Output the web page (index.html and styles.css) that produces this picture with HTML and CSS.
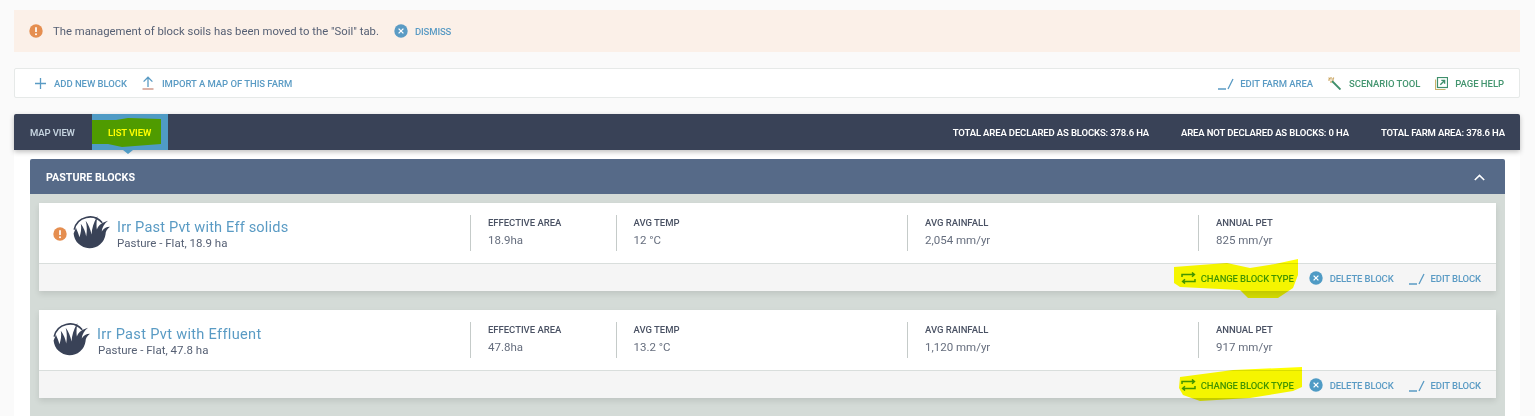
FILE: index.html
```html
<!DOCTYPE html>
<html lang="en">
<head>
<meta charset="utf-8">
<title>Blocks</title>
<link rel="stylesheet" href="styles.css">
</head>
<body>
<svg class="defs" width="0" height="0" aria-hidden="true">
  <defs>
    <symbol id="grass" viewBox="0 0 38 36">
      <path d="M1.2 15A16.5 16.5 0 0 1 30 8" fill="none" stroke="#394257" stroke-width="1.7"/>
      <path d="M.6 19L3 13C4 16 6 19 6.5 23C8 19 9 14 8 9C11 13 13 18 13.5 22C14.5 17 14.5 11 13 6C16 10 18 15 19 20C19.5 14 21 8 25 1C24 7 24 11 24.5 15C26.5 10 30 8 36 6C32 9 30 13 29.5 17C31.5 14 34 12 38 12C35 14 33.5 17 33.4 20A16.5 16.5 0 0 1 .6 19Z" fill="#394257"/>
    </symbol>
    <symbol id="edit" viewBox="0 0 16 13">
      <path d="M0 12H8M10 12L15 2" fill="none" stroke="currentColor" stroke-width="1.3"/>
    </symbol>
    <symbol id="close" viewBox="0 0 14 14">
      <circle cx="7" cy="7" r="6.7" fill="currentColor"/>
      <path d="M4.6 4.6L9.4 9.4M9.4 4.6L4.6 9.4" stroke="#fff" stroke-width="1.3"/>
    </symbol>
    <symbol id="warn" viewBox="0 0 14 14">
      <circle cx="7" cy="7" r="6.7" fill="#e58e50"/>
      <path d="M7 3.2V8" stroke="#fff" stroke-width="1.7"/>
      <circle cx="7" cy="10.2" r="1" fill="#fff"/>
    </symbol>
    <symbol id="swap" viewBox="0 0 15 12">
      <path d="M1 5V2.6H13M11 .5L13.4 2.6L11 4.7M14 7V9.4H2M4 7.3L1.6 9.4L4 11.5" fill="none" stroke="currentColor" stroke-width="1.5"/>
    </symbol>
  </defs>
</svg>

<div class="alert">
  <svg class="ic14"><use href="#warn"/></svg>
  <span class="alert-text">The management of block soils has been moved to the "Soil" tab.</span>
  <span class="link alert-link"><svg class="ic14"><use href="#close"/></svg>DISMISS</span>
</div>

<nav class="toolbar">
  <div class="tools">
    <span class="link"><svg class="ic-add" viewBox="0 0 11 11"><path d="M5.5 0V11M0 5.5H11" stroke="currentColor" stroke-width="1.3"/></svg>ADD NEW BLOCK</span>
    <span class="link"><svg class="ic-up" viewBox="0 0 12 14"><path d="M6 11V1.5M1.6 5.6L6 1.2L10.4 5.6" fill="none" stroke="currentColor" stroke-width="1.3"/><path d="M.5 13H11.5" stroke="#c98a7a" stroke-width="1.3"/></svg>IMPORT A MAP OF THIS FARM</span>
  </div>
  <div class="tools">
    <span class="link"><svg class="ic-edit"><use href="#edit"/></svg>EDIT FARM AREA</span>
    <span class="link green"><svg class="ic-wand" viewBox="0 0 13 13"><path d="M4 4L12.5 12.5" stroke="#3f8f6c" stroke-width="1.9"/><path d="M3 0V2.5M0 3H2.2M3.8 3H6M3 3.8V6M6 .6L4.6 2M.6 .6L2 2" stroke="#c9a25b" stroke-width="1.1"/></svg>SCENARIO TOOL</span>
    <span class="link green"><svg class="ic-help" viewBox="0 0 13 13"><path d="M.5 2.5V12.5H10.5" fill="none" stroke="#c9b26b" stroke-width="1.2"/><rect x="2.5" y=".5" width="10" height="10" fill="none" stroke="#3f8f6c" stroke-width="1.2"/><path d="M5.3 7.7L9.3 3.7M6.3 3.4H9.6V6.7" fill="none" stroke="#3f8f6c" stroke-width="1.4"/></svg>PAGE HELP</span>
  </div>
</nav>

<section class="panel">
  <header class="tabbar">
    <div class="tabs">
      <span class="tab tab-map">MAP VIEW</span>
      <span class="tab tab-active">LIST VIEW
        <svg class="mark-tab" viewBox="0 0 76 30"><path d="M0 3H24L36 1L69 2V27L56 28L30 30L16 27H0Z" fill="#ff0"/></svg>
      </span>
    </div>
    <div class="totals">
      <span>TOTAL AREA DECLARED AS BLOCKS: 378.6 HA</span>
      <span>AREA NOT DECLARED AS BLOCKS: 0 HA</span>
      <span>TOTAL FARM AREA: 378.6 HA</span>
    </div>
  </header>

  <div class="group">
    <div class="group-head">
      <h2>PASTURE BLOCKS</h2>
      <svg class="chev" viewBox="0 0 11 7"><path d="M.8 6L5.5 1.4L10.2 6" fill="none" stroke="#fff" stroke-width="1.6"/></svg>
    </div>
    <div class="group-body">
      <article class="card">
        <div class="card-main">
          <div class="identity">
            <svg class="ic14 warn-gap"><use href="#warn"/></svg>
            <svg class="grass"><use href="#grass"/></svg>
            <div class="names">
              <div class="name">Irr Past Pvt with Eff solids</div>
              <div class="sub">Pasture - Flat, 18.9 ha</div>
            </div>
          </div>
          <div class="stat"><b>EFFECTIVE AREA</b><span>18.9ha</span></div>
          <div class="stat"><b>AVG TEMP</b><span>12 °C</span></div>
          <div class="stat"><b>AVG RAINFALL</b><span>2,054 mm/yr</span></div>
          <div class="stat"><b>ANNUAL PET</b><span>825 mm/yr</span></div>
        </div>
        <div class="card-foot">
          <span class="link green"><svg class="ic-swap"><use href="#swap"/></svg>CHANGE BLOCK TYPE</span>
          <span class="link"><svg class="ic14"><use href="#close"/></svg>DELETE BLOCK</span>
          <span class="link"><svg class="ic-edit"><use href="#edit"/></svg>EDIT BLOCK</span>
        </div>
        <svg class="mark" viewBox="1169 253 135 50"><path d="M1174 267L1200 265L1227 263L1250 268L1275 264L1298 259V275L1293 288L1278 298H1248L1240 290L1180 287L1174 283Z" fill="#ff0"/></svg>
      </article>

      <article class="card">
        <div class="card-main">
          <div class="identity">
            <svg class="grass"><use href="#grass"/></svg>
            <div class="names names-b">
              <div class="name">Irr Past Pvt with Effluent</div>
              <div class="sub">Pasture - Flat, 47.8 ha</div>
            </div>
          </div>
          <div class="stat"><b>EFFECTIVE AREA</b><span>47.8ha</span></div>
          <div class="stat"><b>AVG TEMP</b><span>13.2 °C</span></div>
          <div class="stat"><b>AVG RAINFALL</b><span>1,120 mm/yr</span></div>
          <div class="stat"><b>ANNUAL PET</b><span>917 mm/yr</span></div>
        </div>
        <div class="card-foot">
          <span class="link green"><svg class="ic-swap"><use href="#swap"/></svg>CHANGE BLOCK TYPE</span>
          <span class="link"><svg class="ic14"><use href="#close"/></svg>DELETE BLOCK</span>
          <span class="link"><svg class="ic-edit"><use href="#edit"/></svg>EDIT BLOCK</span>
        </div>
        <svg class="mark" viewBox="1169 360 135 50"><path d="M1180 377L1233 370L1302 367V387L1293 391L1250 398L1200 401L1183 395L1179 388Z" fill="#ff0"/></svg>
      </article>
    </div>
  </div>
</section>
</body>
</html>
```
FILE: styles.css
```css
html, body { height: 416px; overflow: hidden; }
body {
  margin: 0;
  padding: 10px 15px 0 14px;
  box-sizing: border-box;
  background: #fafafa;
  font-family: Roboto, "Liberation Sans", sans-serif;
  color: #4a5264;
}
.defs { position: absolute; }
svg { display: block; flex: none; }
.ic14 { width: 14px; height: 14px; }

.link {
  display: inline-flex;
  align-items: center;
  font-size: 9.5px;
  font-weight: 500;
  letter-spacing: -.12px;
  color: #5a9bc4;
  white-space: nowrap;
}
.green { color: #43956f; }

.alert {
  height: 42px;
  display: flex;
  align-items: center;
  padding-left: 15px;
  background: #fbf0e8;
}
.alert-text { margin-left: 10px; font-size: 11.3px; color: #566074; letter-spacing: .01px; }
.alert-link { margin-left: 15px; gap: 7px; }

.toolbar {
  margin-top: 16px;
  height: 30px;
  box-sizing: border-box;
  display: flex;
  justify-content: space-between;
  align-items: center;
  padding: 0 15px 0 20px;
  background: #fff;
  border: 1px solid #e6e9e8;
  border-radius: 2px;
}
.toolbar .link { letter-spacing: -.04px; }
.tools { display: flex; align-items: center; gap: 15px; }
.ic-add { width: 11px; height: 11px; margin-right: 8px; }
.ic-up { width: 12px; height: 14px; margin-right: 8px; }
.ic-edit { width: 16px; height: 13px; margin-right: 6px; color: #5a9bc4; }
.ic-wand { width: 13px; height: 13px; margin-right: 8px; }
.ic-help { width: 13px; height: 13px; margin-right: 7px; }
.ic-swap { width: 15px; height: 12px; margin-right: 5px; }

.panel {
  margin-top: 16px;
  background: #fff;
  height: 320px;
}
.tabbar {
  height: 36px;
  display: flex;
  justify-content: space-between;
  background: #394257;
  box-shadow: 0 2px 5px rgba(0,0,0,.25);
  border-radius: 2px 2px 0 0;
  position: relative;
}
.tabs { display: flex; }
.tab {
  display: flex;
  align-items: center;
  box-sizing: border-box;
  padding-left: 16px;
  font-size: 9.5px;
  font-weight: 600;
  letter-spacing: -.12px;
  color: #c4d2de;
  white-space: nowrap;
}
.tab-map { width: 78px; }
.tab-active {
  position: relative;
  width: 76px;
  background: #4f9bc5;
  color: #fff;
}
.tab-active::after {
  content: "";
  position: absolute;
  left: 31px;
  bottom: -4px;
  border: 5px solid transparent;
  border-bottom: 0;
  border-top: 4px solid #4f9bc5;
}
.mark-tab {
  position: absolute;
  left: 0;
  top: 3px;
  width: 76px;
  height: 30px;
  mix-blend-mode: multiply;
}
.totals {
  display: flex;
  align-items: center;
  gap: 32px;
  padding-right: 15px;
  font-size: 9.5px;
  font-weight: 600;
  letter-spacing: -.14px;
  color: #fff;
  white-space: nowrap;
}

.group { margin: 9px 15px 0 16px; height: 275px; overflow: hidden; border-radius: 2px 2px 0 0; }
.group-head {
  height: 35px;
  box-sizing: border-box;
  display: flex;
  align-items: center;
  justify-content: space-between;
  padding: 1px 20px 0 16px;
  background: #566a88;
}
.group-head h2 { margin: 0; font-size: 10.7px; font-weight: 700; color: #fff; }
.chev { width: 11px; height: 7px; }
.group-body {
  height: 240px;
  box-sizing: border-box;
  padding: 9px 9px 0;
  display: flex;
  flex-direction: column;
  gap: 19px;
  background: #d4dbd7;
}

.card {
  position: relative;
  flex: none;
  height: 88px;
  background: #fff;
  box-shadow: 0 3px 6px rgba(0,0,0,.1);
}
.card-main {
  height: 60px;
  box-sizing: border-box;
  display: grid;
  grid-template-columns: 431px 145.5px 291.5px 291px 1fr;
  padding-top: 12px;
}
.identity { display: flex; align-items: flex-start; padding-left: 14px; }
.warn-gap { margin: 12px 6px 0 0; }
.grass { width: 37px; height: 35px; }
.names { margin: 3px 0 0 7px; }
.names-b { margin-left: 7px; }
.name { font-size: 14.6px; line-height: 19px; color: #5a9bc4; white-space: nowrap; letter-spacing: .16px; }
.names-b .name { letter-spacing: .3px; }
.sub { font-size: 11.5px; line-height: 13px; color: #566074; white-space: nowrap; }
.names-b .sub { margin-left: 1px; }
.stat {
  height: 36px;
  box-sizing: border-box;
  padding-left: 17px;
  border-left: 1px solid #c5cbc9;
  display: flex;
  flex-direction: column;
}
.stat b { font-size: 9.5px; line-height: 15px; font-weight: 500; letter-spacing: -.02px; color: #4a5264; white-space: nowrap; }
.stat span { margin-top: 3px; font-size: 11.5px; line-height: 14px; color: #666e7e; white-space: nowrap; }

.card-foot {
  height: 28px;
  box-sizing: border-box;
  display: flex;
  align-items: center;
  justify-content: flex-end;
  gap: 15px;
  padding: 1px 15px 0 0;
  background: #f5f5f5;
  border-top: 1px solid #d9dedc;
}
.card-foot .ic14 { margin-right: 7px; color: #4f9bc5; }
.mark {
  position: absolute;
  left: 1130px;
  top: 50px;
  width: 135px;
  height: 50px;
  mix-blend-mode: multiply;
}
```
